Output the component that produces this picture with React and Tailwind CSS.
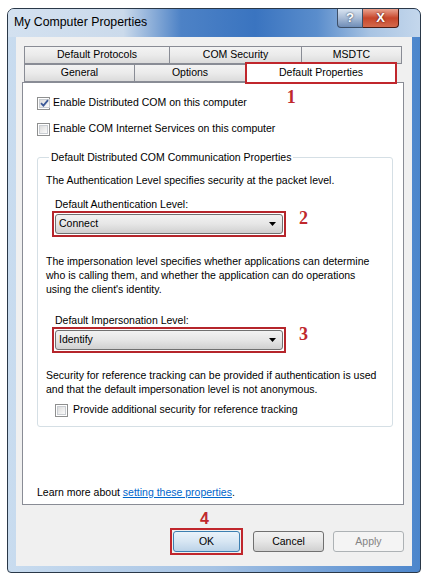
import React from 'react';

const font = { fontFamily: '"Liberation Sans", Arial, sans-serif' };

const Check = ({ checked }) => (
  <span className="w-[13px] h-[13px] shrink-0 border border-[#8e8f8f] bg-white p-px flex">
    <span className="flex-1 border border-[#c9cdd2] bg-gradient-to-br from-[#dcdcdc] to-[#fbfbfb] flex items-center justify-center">
      {checked && (
        <svg width="9" height="8" viewBox="0 0 9 8">
          <path d="M1 4.2 L3.4 6.6 L8 1.2" fill="none" stroke="#3d5a98" strokeWidth="1.8" />
        </svg>
      )}
    </span>
  </span>
);

const Combo = ({ value }) => (
  <div className="w-[234px] h-[26px] border-2 border-[#b5252b] p-px">
    <div className="h-full border border-[#707070] rounded-[3px] bg-gradient-to-b from-[#f2f2f2] via-[#e6e6e6] to-[#d0d0d0] flex items-center justify-between pl-[3px] pr-[6px]">
      <span>{value}</span>
      <svg width="7" height="4" viewBox="0 0 7 4">
        <path d="M0 0 H7 L3.5 4 Z" fill="#000" />
      </svg>
    </div>
  </div>
);

const Num = ({ children }) => (
  <span className="text-[#c0282d] font-bold text-[18px] leading-[18px]" style={{ fontFamily: '"Liberation Serif", serif' }}>
    {children}
  </span>
);

const tabBase = 'h-full flex items-center justify-center border border-[#898c95] -ml-px first:ml-0 bg-gradient-to-b from-[#f3f3f3] via-[#ebebeb] to-[#dbdbdb]';

export default function App() {
  return (
    <div className="w-[426px] h-[578px] bg-white relative overflow-hidden text-[10.5px] text-black" style={font}>
      <div className="ml-[7px] mt-[8px] w-[414px] h-[565px] border border-[#2a3848] rounded-t-[7px] rounded-b-[4px] flex flex-col bg-gradient-to-r from-[#c9dcef] via-[#a6c3e4] to-[#4c86cc]">
        {/* title bar */}
        <div className="h-[28px] flex items-start justify-between rounded-t-[6px] bg-[linear-gradient(90deg,#d3e1f0_0%,#cbdaeb_28%,#4d82c6_42%,#3a74c0_60%,#5a8dcc_75%,#a9c4e3_88%,#c4d7ec_100%)]">
          <span className="self-center ml-[6px] mt-[-1px] text-[12.3px]">My Computer Properties</span>
          <div className="flex mr-[21px]">
            <div className="w-[26px] h-[19px] rounded-bl-[4px] border border-t-0 border-[#3d4f67] bg-gradient-to-b from-[#d9e4f1] via-[#a9bcd6] to-[#6f8db7] flex items-center justify-center text-white font-bold text-[13px] [text-shadow:0_0_2px_#1b2b44]">
              ?
            </div>
            <div className="w-[36px] h-[19px] rounded-br-[4px] border border-t-0 border-l-0 border-[#4a1a12] bg-gradient-to-b from-[#e9a28f] via-[#c7452a] to-[#d3694c] flex items-center justify-center text-white font-bold text-[13px] [text-shadow:0_0_2px_#3a0d06]">
              X
            </div>
          </div>
        </div>

        {/* client */}
        <div className="mx-[8px] h-[529px] bg-[#f0f0f0] flex flex-col pt-[9px]">
          <div className="flex h-[18px] ml-[8px]">
            <div className={`${tabBase} w-[146px]`}>Default Protocols</div>
            <div className={`${tabBase} w-[133px]`}>COM Security</div>
            <div className={`${tabBase} w-[101px]`}>MSDTC</div>
          </div>
          <div className="flex items-start h-[18px] ml-[8px]">
            <div className={`${tabBase} w-[111px]`}>General</div>
            <div className={`${tabBase} w-[112px]`}>Options</div>
            <div className="relative z-10 w-[152px] h-[22px] -mt-[2px] -ml-[1px] border-2 border-[#c0262c] bg-white flex items-center justify-center">
              Default Properties
            </div>
          </div>

          {/* panel */}
          <div className="ml-[6px] w-[382px] h-[423px] border border-[#898c95] bg-white flex flex-col pl-[14px]">
            <div className="flex items-center h-[14px] mt-[13px]">
              <Check checked />
              <span className="ml-[3px]">Enable Distributed COM on this computer</span>
              <span className="ml-[40px] -mt-[10px]"><Num>1</Num></span>
            </div>
            <div className="flex items-center h-[14px] mt-[12px]">
              <Check />
              <span className="ml-[3px]">Enable COM Internet Services on this computer</span>
            </div>

            <fieldset className="mt-[15px] w-[356px] border border-[#d5dfe5] rounded-[3px] pl-[8px] pr-[4px] pb-[9px]">
              <legend className="px-[2px] ml-[3px] leading-[12px]">Default Distributed COM Communication Properties</legend>
              <div className="mt-[11px] leading-[12px]">The Authentication Level specifies security at the packet level.</div>
              <div className="mt-[12px] ml-[9px] leading-[12px]">Default Authentication Level:</div>
              <div className="flex items-center mt-px ml-[6px]">
                <Combo value="Connect" />
                <span className="ml-[13px] -mt-[10px]"><Num>2</Num></span>
              </div>
              <div className="mt-[17px] leading-[14px]">
                The impersonation level specifies whether applications can determine
                <br />
                who is calling them, and whether the application can do operations
                <br />
                using the client's identity.
              </div>
              <div className="mt-[18px] ml-[9px] leading-[12px]">Default Impersonation Level:</div>
              <div className="flex items-center mt-px ml-[6px]">
                <Combo value="Identify" />
                <span className="ml-[13px] -mt-[10px]"><Num>3</Num></span>
              </div>
              <div className="mt-[15px] leading-[14px]">
                Security for reference tracking can be provided if authentication is used
                <br />
                and that the default impersonation level is not anonymous.
              </div>
              <div className="flex items-center h-[14px] mt-[7px] ml-[9px]">
                <Check />
                <span className="ml-[5px]">Provide additional security for reference tracking</span>
              </div>
            </fieldset>

            <div className="mt-auto mb-[6px] leading-[12px]">
              Learn more about{' '}
              <span className="text-[#0066cc] underline">setting these properties</span>.
            </div>
          </div>

          <div className="h-[23px] flex items-center">
            <span className="ml-[184px] mt-[4px] text-[#c0282d] font-bold text-[16px]">4</span>
          </div>

          <div className="flex items-center h-[27px]">
            <div className="ml-[154px] w-[73px] h-[27px] border-2 border-[#c0262c] p-px">
              <div className="h-full border border-[#3c7fb1] rounded-[3px] bg-gradient-to-b from-[#eaf3fb] via-[#d7e6f3] to-[#bcd3e8] flex items-center justify-center">
                OK
              </div>
            </div>
            <div className="ml-[10px] w-[71px] h-[21px] border border-[#707070] rounded-[3px] bg-gradient-to-b from-[#f2f2f2] via-[#e6e6e6] to-[#d0d0d0] flex items-center justify-center">
              Cancel
            </div>
            <div className="ml-[9px] w-[71px] h-[21px] border border-[#adb2b5] rounded-[3px] bg-[#f4f4f4] text-[#838383] flex items-center justify-center">
              Apply
            </div>
          </div>
        </div>
      </div>
    </div>
  );
}
